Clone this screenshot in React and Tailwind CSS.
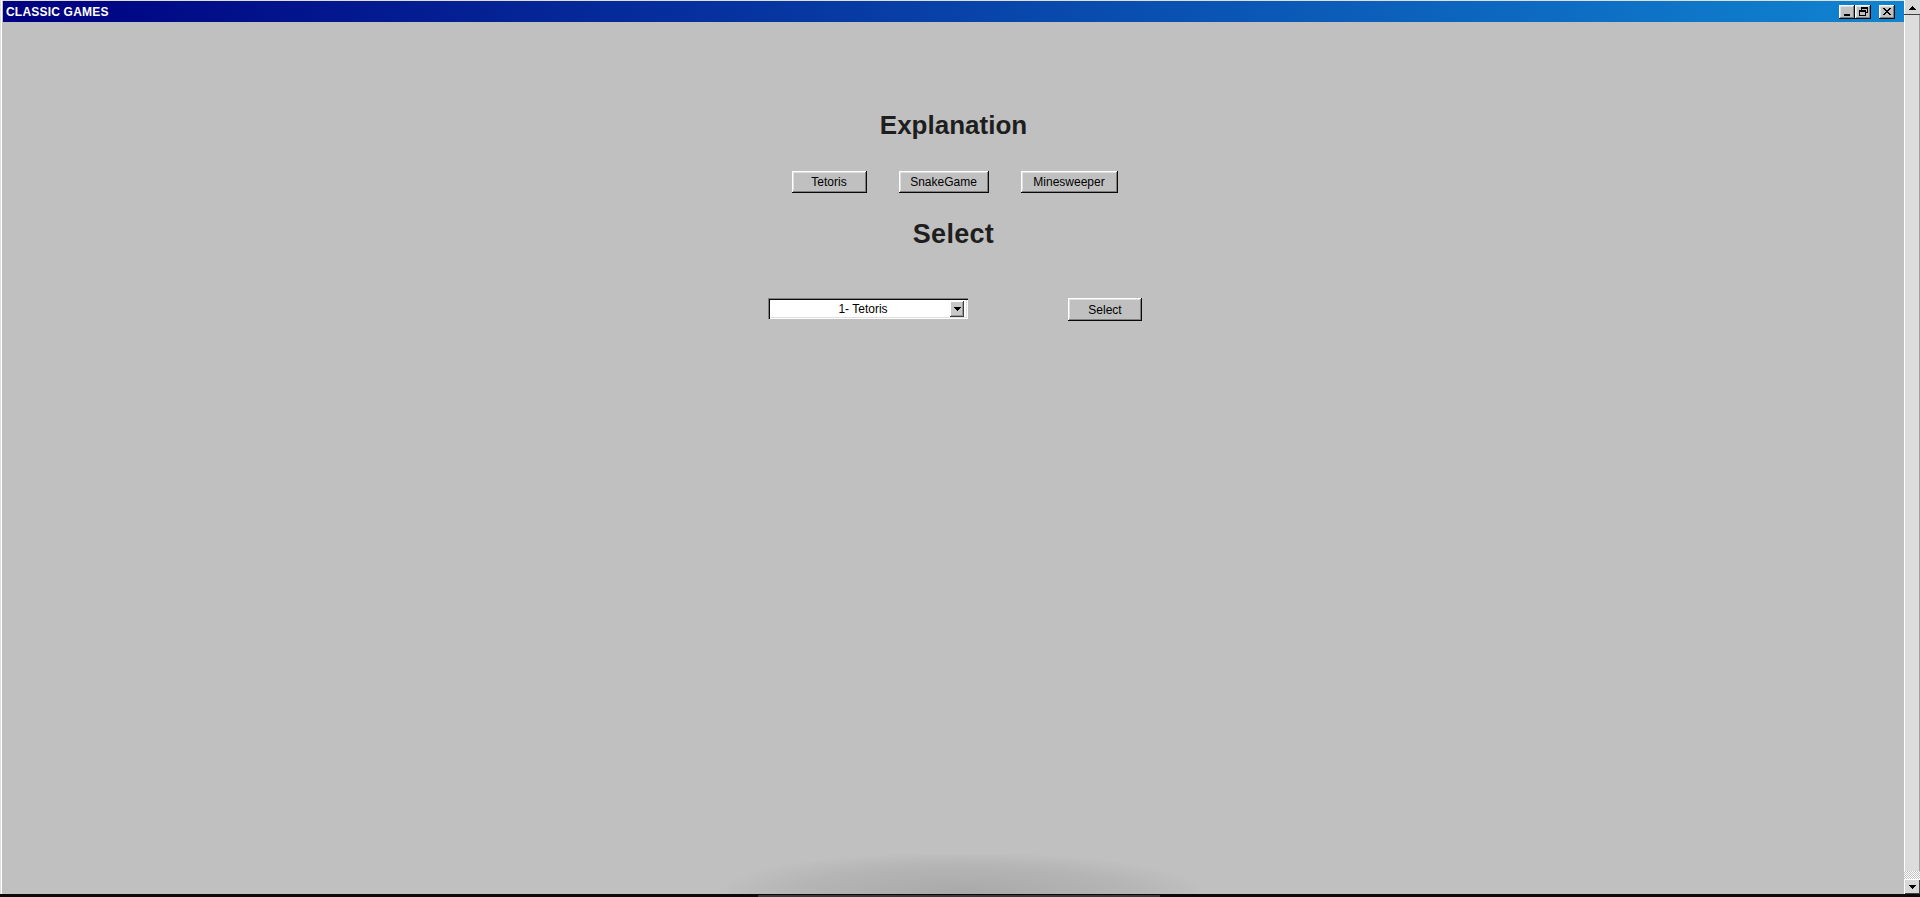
import React from "react";

const btn =
  "flex items-center justify-center bg-[#c0c0c0] text-[12px] text-black shadow-[inset_-1px_-1px_#0a0a0a,inset_1px_1px_#ffffff,inset_-2px_-2px_#808080,inset_2px_2px_#dfdfdf]";

function TitleButton({ children }) {
  return (
    <div className="flex h-[14px] w-[16px] items-center justify-center bg-[#c0c0c0] shadow-[inset_-1px_-1px_#0a0a0a,inset_1px_1px_#ffffff,inset_-2px_-2px_#808080,inset_2px_2px_#dfdfdf]">
      {children}
    </div>
  );
}

export default function App() {
  return (
    <div
      className="flex h-[897px] w-[1920px] flex-col overflow-hidden bg-[#c0c0c0]"
      style={{ fontFamily: '"Liberation Sans", Arial, sans-serif' }}
    >
      <div className="flex min-h-0 flex-1">
        {/* window */}
        <div className="relative flex min-w-0 flex-1 flex-col pl-[3px] pt-[1px] shadow-[inset_1px_0_#dfdfdf,inset_2px_0_#ffffff,inset_0_1px_#dfdfdf]">
          {/* title bar */}
          <div className="flex h-[21px] shrink-0 items-center bg-[linear-gradient(to_right,#000080,#1084d0)] pl-[3px] pr-[9px]">
            <span className="text-[12px] font-bold leading-none tracking-[0.2px] text-white">
              CLASSIC GAMES
            </span>
            <div className="ml-auto flex items-center">
              <TitleButton>
                <div className="mt-[6px] h-[2px] w-[6px] bg-black" />
              </TitleButton>
              <TitleButton>
                <svg width="9" height="9" viewBox="0 0 9 9" shapeRendering="crispEdges">
                  <rect x="2.5" y="0.5" width="6" height="5" fill="none" stroke="#000" />
                  <rect x="2" y="0" width="7" height="2" fill="#000" />
                  <rect x="0.5" y="3.5" width="6" height="5" fill="#c0c0c0" stroke="#000" />
                  <rect x="0" y="3" width="7" height="2" fill="#000" />
                </svg>
              </TitleButton>
              <div className="ml-[8px]">
                <TitleButton>
                  <svg width="8" height="7" viewBox="0 0 8 7" shapeRendering="crispEdges">
                    <path d="M0 0h2v1h1v1h2V1h1V0h2v1H7v1H6v1H5v1h1v1h1v1h1v1H6V6H5V5H3v1H2v1H0V6h1V5h1V4h1V3H2V2H1V1H0z" fill="#000" />
                  </svg>
                </TitleButton>
              </div>
            </div>
          </div>

          {/* content */}
          <div className="relative flex flex-1 flex-col items-center bg-[#c0c0c0]">
            <h1 className="mt-[90px] text-[26px] font-bold leading-[26px] text-[#1e1e1e]">
              Explanation
            </h1>
            <div className="mt-[33px] flex gap-[32px] pl-[2px]">
              <button className={`${btn} h-[22px] w-[75px]`}>Tetoris</button>
              <button className={`${btn} h-[22px] w-[90px]`}>SnakeGame</button>
              <button className={`${btn} h-[22px] w-[97px]`}>Minesweeper</button>
            </div>
            <h2 className="mt-[28px] text-[27px] font-bold leading-[26px] tracking-[0.3px] text-[#1e1e1e]">
              Select
            </h2>
            <div className="mt-[51px] flex items-start gap-[100px] pl-[3px]">
              <div className="flex h-[21px] w-[200px] items-center bg-white pl-[2px] pr-[4px] shadow-[inset_1px_1px_#808080,inset_2px_2px_#0a0a0a,inset_-1px_-1px_#ffffff,inset_-2px_-2px_#dfdfdf]">
                <span className="flex-1 pl-[6px] text-center text-[12px] leading-none text-black">
                  1- Tetoris
                </span>
                <div className="flex h-[16px] w-[14px] items-center justify-center bg-[#c8c8c8] shadow-[inset_-1px_-1px_#404040,inset_1px_1px_#ffffff,inset_-2px_-2px_#9a9a9a]">
                  <svg width="7" height="4" viewBox="0 0 7 4" shapeRendering="crispEdges">
                    <path d="M0 0h7v1H6v1H5v1H4v1H3V3H2V2H1V1H0z" fill="#000" />
                  </svg>
                </div>
              </div>
              <button className={`${btn} h-[23px] w-[74px]`}>Select</button>
            </div>

            <div className="pointer-events-none absolute bottom-0 left-[724px] h-[40px] w-[470px] bg-[radial-gradient(ellipse_at_bottom,rgba(0,0,0,0.12),rgba(0,0,0,0.06)_50%,transparent_75%)]" />
          </div>
        </div>

        {/* scrollbar */}
        <div className="flex w-[16px] shrink-0 flex-col bg-[#dfdfdf]">
          <div className="flex h-[15px] shrink-0 items-center justify-center bg-[#d8d8d8] shadow-[inset_0_-1px_#404040,inset_1px_0_#ffffff]">
            <svg width="7" height="4" viewBox="0 0 7 4" shapeRendering="crispEdges">
              <path d="M3 0h1v1h1v1h1v1h1v1H0V3h1V2h1V1h1z" fill="#000" />
            </svg>
          </div>
          <div className="flex-1 bg-[#dcdcdc] shadow-[inset_1px_0_#ffffff,inset_-1px_0_#a0a0a0]" />
          <div className="h-[8px] shrink-0 bg-[repeating-conic-gradient(#c0c0c0_0%_25%,#ffffff_0%_50%)] bg-[length:2px_2px]" />
          <div className="flex h-[15px] shrink-0 items-center justify-center bg-[#d8d8d8] shadow-[inset_1px_1px_#ffffff,inset_-1px_-1px_#404040]">
            <svg width="7" height="4" viewBox="0 0 7 4" shapeRendering="crispEdges">
              <path d="M0 0h7v1H6v1H5v1H4v1H3V3H2V2H1V1H0z" fill="#000" />
            </svg>
          </div>
        </div>
      </div>
      <div className="flex h-[3px] shrink-0 bg-[#0a0a0a]">
        <div className="ml-[758px] mt-[1px] h-[2px] w-[402px] bg-[#3a3a3a]" />
      </div>
    </div>
  );
}
